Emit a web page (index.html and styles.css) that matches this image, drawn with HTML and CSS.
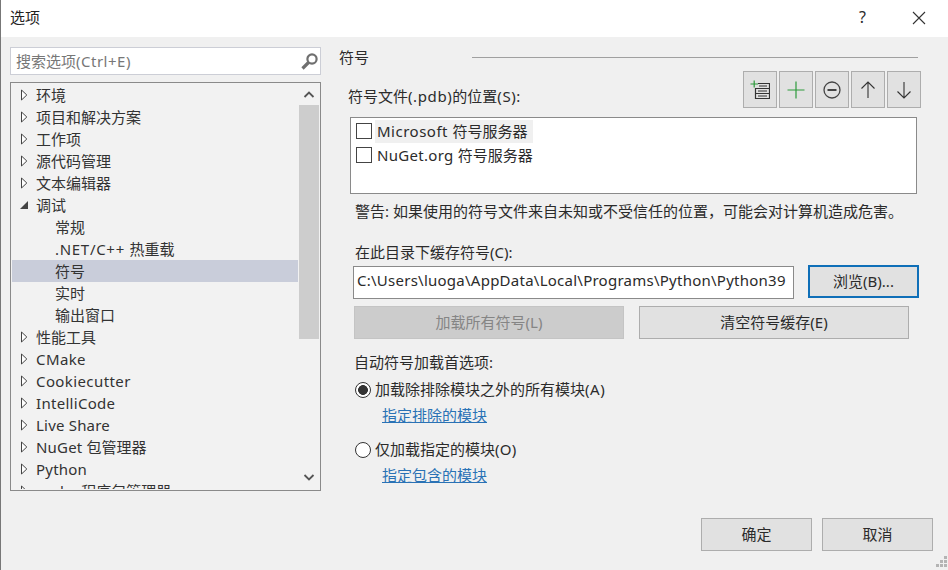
FILE: index.html
```html
<!DOCTYPE html>
<html lang="zh-CN">
<head>
<meta charset="utf-8">
<title>选项</title>
<link rel="stylesheet" href="styles.css">
</head>
<body>
<svg class="defs" width="0" height="0" aria-hidden="true">
  <symbol id="closed" viewBox="0 0 8 12"><path d="M1.5 1 L6.8 6 L1.5 11 Z" fill="#fff" stroke="#444" stroke-width="1"/></symbol>
  <symbol id="open" viewBox="0 0 10 10"><path d="M9 1 V9 H1 Z" fill="#444"/></symbol>
</svg>
<div class="dialog">
  <header class="titlebar">
    <span class="title">选项</span>
    <span class="help">?</span>
    <svg class="close" width="14" height="14" viewBox="0 0 14 14"><path d="M1 1 L13 13 M13 1 L1 13" stroke="#333" stroke-width="1.1" fill="none"/></svg>
  </header>
  <main class="main">
    <aside class="sidebar">
      <div class="search">
        <span class="search-text">搜索选项<span class="ls5">(Ctrl+E)</span></span>
        <svg width="18" height="18" viewBox="0 0 18 18"><circle cx="12" cy="7" r="4.6" fill="none" stroke="#6f6f6f" stroke-width="2.2"/><path d="M8.5 10.5 L2.5 16.5" stroke="#6f6f6f" stroke-width="3.2" fill="none"/></svg>
      </div>
      <div class="tree">
        <div class="tree-list">
          <div class="row"><svg class="tw"><use href="#closed"/></svg>环境</div>
          <div class="row"><svg class="tw"><use href="#closed"/></svg>项目和解决方案</div>
          <div class="row"><svg class="tw"><use href="#closed"/></svg>工作项</div>
          <div class="row"><svg class="tw"><use href="#closed"/></svg>源代码管理</div>
          <div class="row"><svg class="tw"><use href="#closed"/></svg>文本编辑器</div>
          <div class="row"><svg class="tw tw-open"><use href="#open"/></svg>调试</div>
          <div class="row child">常规</div>
          <div class="row child"><span class="ls7">.NET/C++&nbsp;</span>热重载</div>
          <div class="row child selected">符号</div>
          <div class="row child">实时</div>
          <div class="row child">输出窗口</div>
          <div class="row"><svg class="tw"><use href="#closed"/></svg>性能工具</div>
          <div class="row"><svg class="tw"><use href="#closed"/></svg><span class="ls4">CMake</span></div>
          <div class="row"><svg class="tw"><use href="#closed"/></svg><span class="ls4">Cookiecutter</span></div>
          <div class="row"><svg class="tw"><use href="#closed"/></svg><span class="ls3">IntelliCode</span></div>
          <div class="row"><svg class="tw"><use href="#closed"/></svg><span class="ls2">Live Share</span></div>
          <div class="row"><svg class="tw"><use href="#closed"/></svg><span class="ls2">NuGet&nbsp;</span>包管理器</div>
          <div class="row"><svg class="tw"><use href="#closed"/></svg><span class="ls2">Python</span></div>
          <div class="row"><svg class="tw"><use href="#closed"/></svg>vcpkg 程序包管理器</div>
        </div>
        <div class="scrollbar">
          <svg class="arrow" width="20" height="21" viewBox="0 0 20 21"><path d="M5.5 13 L10 8.5 L14.5 13" fill="none" stroke="#555" stroke-width="1.8"/></svg>
          <div class="thumb"></div>
          <div class="track"></div>
          <svg class="arrow" width="20" height="21" viewBox="0 0 20 21"><path d="M5.5 7 L10 11.5 L14.5 7" fill="none" stroke="#555" stroke-width="1.8"/></svg>
        </div>
      </div>
    </aside>
    <section class="panel">
      <div class="heading"><span class="heading-text">符号</span><span class="rule"></span></div>
      <div class="loc-row">
        <span class="loc-label">符号文件<span class="ls6">(.pdb)</span>的位置<span class="ls6">(S):</span></span>
        <div class="tools">
          <button class="tool"><svg width="20" height="20" viewBox="0 0 20 20"><path d="M0.5 4 H8 M4.2 0.5 V7.5" stroke="#2e9b3c" stroke-width="1.2" fill="none"/><path d="M8 3.5 H19.5 V8.5 M5.5 8.5 H19.5 V13.5 H5.5 Z M5.5 13.5 V18.5 H19.5 V13.5" fill="none" stroke="#333" stroke-width="1.2"/><path d="M9 6 H17 M8 11 H17 M8 16 H17" stroke="#333" stroke-width="1"/></svg></button>
          <button class="tool"><svg width="18" height="18" viewBox="0 0 18 18"><path d="M0.5 9 H17.5 M9 0.5 V17.5" stroke="#2e9b3c" stroke-width="1.2" fill="none"/></svg></button>
          <button class="tool"><svg width="18" height="18" viewBox="0 0 18 18"><circle cx="9" cy="9" r="8" fill="none" stroke="#444" stroke-width="1.3"/><path d="M4.5 9 H13.5" stroke="#444" stroke-width="2"/></svg></button>
          <button class="tool"><svg width="16" height="18" viewBox="0 0 16 18"><path d="M8 17 V1 M1.5 7.5 L8 1 L14.5 7.5" fill="none" stroke="#333" stroke-width="1.1"/></svg></button>
          <button class="tool"><svg width="16" height="18" viewBox="0 0 16 18"><path d="M8 1 V17 M1.5 10.5 L8 17 L14.5 10.5" fill="none" stroke="#333" stroke-width="1.1"/></svg></button>
        </div>
      </div>
      <div class="listbox">
        <div class="list-item"><span class="check"></span><span class="item-text hover"><span class="ls5">Microsoft&nbsp;</span>符号服务器</span></div>
        <div class="list-item"><span class="check"></span><span class="item-text"><span class="ls3">NuGet.org&nbsp;</span>符号服务器</span></div>
      </div>
      <p class="warning">警告: 如果使用的符号文件来自未知或不受信任的位置，可能会对计算机造成危害。</p>
      <p class="cache-label">在此目录下缓存符号(C):</p>
      <div class="path-row">
        <div class="path-input">C:\Users\luoga\AppData\Local\Programs\Python\Python39</div>
        <button class="btn browse">浏览(B)...</button>
      </div>
      <div class="action-row">
        <button class="btn wide disabled">加载所有符号(L)</button>
        <button class="btn wide">清空符号缓存(E)</button>
      </div>
      <p class="pref-label">自动符号加载首选项:</p>
      <div class="radio-row first"><span class="radio on"></span><span class="radio-text">加载除排除模块之外的所有模块<span class="ls6">(A)</span></span></div>
      <a class="link">指定排除的模块</a>
      <div class="radio-row second"><span class="radio"></span><span class="radio-text">仅加载指定的模块<span class="ls3">(O)</span></span></div>
      <a class="link">指定包含的模块</a>
    </section>
  </main>
  <footer class="footer">
    <button class="btn foot">确定</button>
    <button class="btn foot">取消</button>
  </footer>
  <svg class="grip" width="13" height="12" viewBox="0 0 13 12"><path d="M9 0h3v3H9zM5 4h3v3H5zM9 4h3v3H9zM1 8h3v3H1zM5 8h3v3H5zM9 8h3v3H9z" fill="#b4b4b4"/></svg>
</div>
</body>
</html>
```
FILE: styles.css
```css
* { box-sizing: border-box; }
html, body { margin: 0; padding: 0; }
body {
  width: 948px;
  height: 570px;
  overflow: hidden;
  font-family: "Noto Sans", "Noto Sans CJK SC", sans-serif;
  font-size: 15px;
  color: #2b2b2b;
}
button { font: inherit; color: inherit; padding: 0; }
p { margin: 0; }
.defs { position: absolute; }

.ls2 { letter-spacing: 0.2px; }
.ls3 { letter-spacing: 0.3px; }
.ls4 { letter-spacing: 0.4px; }
.ls5 { letter-spacing: 0.5px; }
.ls6 { letter-spacing: 0.6px; }
.ls7 { letter-spacing: 0.7px; }

.dialog {
  position: relative;
  width: 948px;
  height: 570px;
  background: #f0f0f0;
  border-left: 1px solid #777;
  display: flex;
  flex-direction: column;
}

.titlebar {
  height: 37px;
  background: #fff;
  display: flex;
  align-items: center;
  padding: 0 22px 0 9px;
  flex: none;
}
.title { font-size: 15px; color: #222; flex: 1; line-height: 35px; height: 37px; }
.help { font-size: 16px; margin: 0 46px 3px 0; }
.close { margin-bottom: 1px; }

.main { display: flex; flex: none; height: 464px; }

.sidebar { width: 311px; margin: 10px 0 0 9px; flex: none; }
.search {
  height: 28px;
  background: #fff;
  border: 1px solid #ccced6;
  display: flex;
  align-items: center;
  justify-content: space-between;
  padding: 0 2px 0 5px;
}
.search-text { color: #777; font-size: 15px; margin-bottom: 2px; }
.tree {
  height: 409px;
  margin-top: 7px;
  border: 1px solid #8a8a8a;
  background: #f2f2f2;
  display: flex;
  padding: 1px;
  overflow: hidden;
}
.tree-list { width: 286px; flex: none; overflow: hidden; }
.row {
  height: 22px;
  line-height: 22px;
  display: flex;
  align-items: center;
  padding-left: 24px;
  white-space: nowrap;
  color: #333;
}
.tw { width: 8px; height: 12px; margin: 0 8px 0 -16px; flex: none; }
.tw-open { width: 10px; height: 10px; margin-left: -17px; margin-right: 7px; }
.child { padding-left: 43px; }
.selected { background: #c9cdda; }

.scrollbar { width: 20px; margin-left: 1px; display: flex; flex-direction: column; flex: none; }
.arrow { flex: none; display: block; }
.thumb { height: 234px; background: #cdcdcd; flex: none; }
.track { flex: 1; }

.panel { margin-left: 18px; flex: 1; min-width: 0; }
.heading { display: flex; align-items: center; height: 20px; margin-top: 10px; }
.heading-text { width: 133px; flex: none; margin-bottom: 2px; }
.rule { width: 446px; height: 1px; background: #a0a0a0; flex: none; }

.loc-row { display: flex; margin-top: 4px; height: 39px; align-items: stretch; }
.loc-label { margin-left: 9px; margin-top: 12px; line-height: 26px; width: 395px; flex: none; }
.tools { display: flex; gap: 2px; height: 37px; }
.tool {
  width: 34px;
  height: 37px;
  background: #e1e1e1;
  border: 1px solid #adadad;
  display: flex;
  align-items: center;
  justify-content: center;
}

.listbox {
  width: 567px;
  height: 77px;
  margin: 7px 0 0 11px;
  background: #fff;
  border: 1px solid #8a8a8a;
  padding: 1px 0 0 5px;
}
.list-item { height: 24px; display: flex; align-items: center; }
.check { width: 16px; height: 16px; border: 1px solid #444; background: #fff; margin-right: 3px; flex: none; }
.item-text { padding: 0 6px 0 2px; height: 23px; line-height: 22px; align-self: flex-end; }
.hover { background: #f0f0f0; }

.warning { margin: 6px 0 0 16px; line-height: 22px; white-space: nowrap; }
.cache-label { margin: 19px 0 0 16px; line-height: 22px; }

.path-row { display: flex; margin: 3px 0 0 14px; align-items: flex-start; }
.path-input {
  width: 441px;
  height: 33px;
  background: #fff;
  border: 1px solid #8a8a8a;
  line-height: 27px;
  padding-left: 3px;
  white-space: nowrap;
  overflow: hidden;
  letter-spacing: 0.25px;
}
.btn {
  background: #e1e1e1;
  border: 1px solid #adadad;
  display: flex;
  align-items: center;
  justify-content: center;
  padding-bottom: 2px;
}
.browse { width: 111px; height: 33px; margin: -1px 0 0 14px; border: 2px solid #0f6fb8; }

.action-row { display: flex; gap: 15px; margin: 7px 0 0 15px; }
.wide { width: 270px; height: 33px; }
.disabled { background: #cccccc; border-color: #c4c4c4; color: #858585; }

.pref-label { margin: 12px 0 0 15px; line-height: 22px; }
.radio-row { display: flex; align-items: center; line-height: 22px; margin-left: 16px; height: 22px; }
.radio-text { margin-bottom: 2px; }
.first { margin-top: 6px; }
.second { margin-top: 13px; }
.radio {
  width: 16px;
  height: 16px;
  border-radius: 50%;
  border: 1px solid #333;
  background: #fff;
  margin-right: 4px;
  flex: none;
  display: block;
}
.on { background: radial-gradient(circle, #333 0 4.6px, #fff 5.2px); }
.link {
  display: block;
  width: max-content;
  margin: 3px 0 0 43px;
  line-height: 22px;
  color: #2a72b5;
  text-decoration: underline;
}

.footer { display: flex; justify-content: flex-end; gap: 10px; padding: 17px 15px 0 0; }
.foot { width: 111px; height: 33px; }

.grip { position: absolute; right: 0; bottom: 2px; }
```
